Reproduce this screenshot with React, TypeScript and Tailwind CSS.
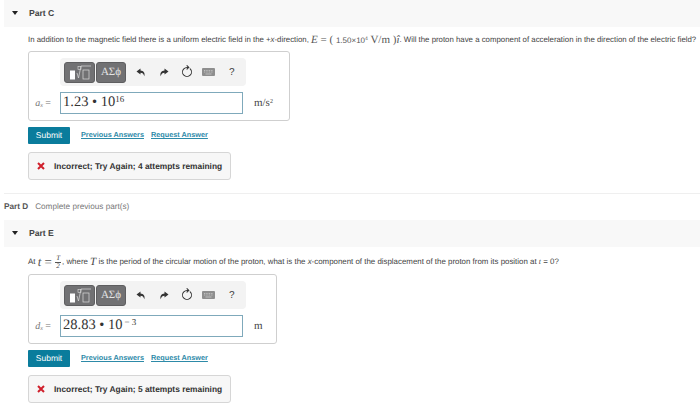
import React from 'react';
import { RotateCw } from 'lucide-react';

const serif = { fontFamily: '"Liberation Serif", serif' };

const PartHeader = ({ title }: { title: string }) => (
  <div className="ml-1 h-[27px] bg-[#f8f8f8] flex items-center pl-[8px]">
    <svg width="6" height="4" viewBox="0 0 6 4" className="mr-[11px] mt-[-1px]">
      <path d="M0 0h6L3 4z" fill="#222" />
    </svg>
    <span className="text-[8.6px] font-semibold text-[#444]">{title}</span>
  </div>
);

const Toolbar = () => (
  <div className="ml-[31px] w-[186px] h-[28px] bg-[#f3f3f3] rounded-[4px] flex items-center pl-[4px]">
    <div className="w-[31px] h-[21px] rounded-[3px] bg-[#717173] border border-[#5e5e60] flex items-center justify-center mr-[1px]">
      <svg width="26" height="17" viewBox="0 0 26 17">
        <rect x="3" y="6.500" width="5" height="9" fill="#fff" />
        <path d="M10 9l1.500 5L14 2h10" stroke="#ddd" strokeWidth="0.7" fill="none" />
        <rect x="11" y="2.500" width="3" height="3" stroke="#ddd" strokeWidth="0.6" fill="none" />
        <rect x="16" y="6" width="6" height="9" stroke="#ddd" strokeWidth="0.7" fill="none" />
      </svg>
    </div>
    <div className="w-[30px] h-[21px] rounded-[3px] bg-[#717173] border border-[#5e5e60] flex items-center justify-center text-[11px] text-[#e4e4e4]" style={serif}>
      ΑΣϕ
    </div>
    <svg width="10" height="9" viewBox="0 0 10 9" className="ml-[10px]">
      <path d="M4.500 0.500L0.500 3.500l4 3V4.700c2 0 3.200 1 3.800 3.500C9.300 4.800 7.500 2.700 4.500 2.400z" fill="#333" />
    </svg>
    <svg width="10" height="9" viewBox="0 0 10 9" className="ml-[13px]">
      <path d="M5.500 0.500l4 3-4 3V4.700c-2 0-3.200 1-3.800 3.500C.7 4.800 2.500 2.700 5.500 2.400z" fill="#333" />
    </svg>
    <RotateCw size={12} strokeWidth={2} color="#333" className="ml-[12px] -rotate-45" />
    <svg width="13" height="8" viewBox="0 0 13 8" className="ml-[9px]">
      <rect width="13" height="8" rx="1" fill="#8e8e8e" />
      <path d="M2 2.500h9M2 4h9" stroke="#ccc" strokeWidth="0.8" strokeDasharray="1 0.7" />
      <path d="M3.500 6h6" stroke="#ccc" strokeWidth="0.8" />
    </svg>
    <span className="ml-[14px] text-[10px] text-[#444]">?</span>
  </div>
);

const AnswerBox = ({ width, symbol, value, exp, unit }: { width: string; symbol: string; value: string; exp: React.ReactNode; unit: React.ReactNode }) => (
  <div className={`ml-[28px] ${width} h-[70px] border border-[#cfcfcf] rounded-[3px] pt-[6px]`}>
    <Toolbar />
    <div className="flex items-center mt-[6px] h-[22px]">
      <div className="w-[31px] text-[10px] text-[#777] text-right pr-[9px] whitespace-nowrap" style={serif}>
        <i>{symbol}</i>
        <sub className="text-[6px] italic">x</sub> =
      </div>
      <div className="w-[183px] h-[22px] border border-[#7fa9bb] flex items-center pl-[2px] text-[#333] text-[14.500px] whitespace-nowrap" style={serif}>
        {value}
        {exp}
      </div>
      <div className="ml-[11px] text-[11px] text-[#444]" style={serif}>{unit}</div>
    </div>
  </div>
);

const Actions = () => (
  <div className="ml-[28px] mt-[6px] flex items-center h-[17px]">
    <div className="w-[42px] h-[17px] bg-[#0a7c9c] rounded-[1px] text-white text-[8.500px] flex items-center justify-center">Submit</div>
    <span className="ml-[11px] text-[7.300px] font-bold underline text-[#2d8aa8]">Previous Answers</span>
    <span className="ml-[7px] text-[7.300px] font-bold underline text-[#2d8aa8]">Request Answer</span>
  </div>
);

const Feedback = ({ text }: { text: string }) => (
  <div className="ml-[28px] mt-[8px] w-[203px] h-[28px] bg-[#f7f7f7] border border-[#d6d6d6] rounded-[3px] flex items-center pl-[8px]">
    <svg width="8" height="8" viewBox="0 0 8 8" className="mr-[9px]">
      <path d="M1 1l6 6M7 1L1 7" stroke="#d0202c" strokeWidth="2" />
    </svg>
    <span className="text-[8.400px] font-bold text-[#333] whitespace-nowrap">{text}</span>
  </div>
);

export default function App() {
  return (
    <div className="w-[700px] h-[411px] overflow-hidden bg-white [text-rendering:geometricPrecision]" style={{ fontFamily: '"Liberation Sans", sans-serif' }}>
      <PartHeader title="Part C" />
      <div className="ml-[28px] h-[24px] pt-[2px] flex items-center text-[7.840px] text-[#444] whitespace-nowrap">
        In addition to the magnetic field there is a uniform electric field in the +<i>x</i>-direction,&nbsp;
        <span className="text-[11px] text-[#555]" style={serif}>
          <i>E</i> = ( <span className="text-[8px]" style={{ fontFamily: '"Liberation Sans", sans-serif' }}>1.50×10<sup className="text-[5px]">4</sup></span> V/m )<i>î</i>
        </span>
        . Will the proton have a component of acceleration in the direction of the electric field?
      </div>
      <AnswerBox
        width="w-[262px]"
        symbol="a"
        value="1.23 • 10"
        exp={<sup className="text-[9px] top-[-0.5em]">16</sup>}
        unit={<>m/s<sup className="text-[6px]">2</sup></>}
      />
      <Actions />
      <Feedback text="Incorrect; Try Again; 4 attempts remaining" />
      <div className="mt-[13px] ml-1 h-[1px] bg-[#efefef]" />
      <div className="ml-1 h-[26px] flex items-center text-[8.200px] pt-[1px]">
        <span className="font-semibold text-[#555]">Part D</span>
        <span className="ml-[7px] text-[#777]">Complete previous part(s)</span>
      </div>
      <PartHeader title="Part E" />
      <div className="ml-[28px] h-[27px] pt-[3px] flex items-center text-[7.900px] text-[#444] whitespace-nowrap">
        At&nbsp;
        <span className="text-[13px] text-[#555]" style={serif}><i>t</i> =&nbsp;</span>
        <span className="inline-flex flex-col items-center text-[7px] leading-[7px] italic mr-[1px]" style={serif}>
          <span className="border-b border-[#555] px-[1px]">T</span>
          <span>2</span>
        </span>
        , where&nbsp;<i className="text-[11px]" style={serif}>T</i>&nbsp;is the period of the circular motion of the proton, what is the&nbsp;<i>x</i>-component of the displacement of the proton from its position at&nbsp;
        <i style={serif}>t</i>&nbsp;= 0?
      </div>
      <AnswerBox
        width="w-[249px]"
        symbol="d"
        value="28.83 • 10"
        exp={<sup className="text-[9px] ml-[2px] top-[-0.5em]">− 3</sup>}
        unit="m"
      />
      <Actions />
      <Feedback text="Incorrect; Try Again; 5 attempts remaining" />
    </div>
  );
}
